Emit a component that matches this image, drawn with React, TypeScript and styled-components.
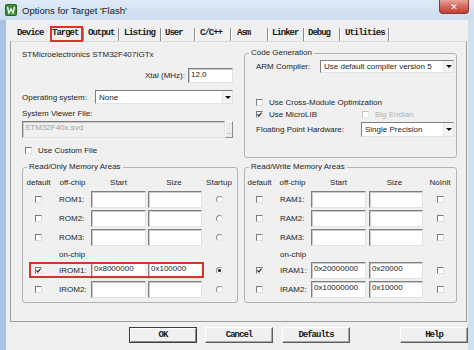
import styled, { createGlobalStyle, css } from "styled-components";

const GlobalStyle = createGlobalStyle`
  html, body {
    margin: 0;
    padding: 0;
    background: #f0f0f0;
  }
  body {
    font-family: "Liberation Sans", Arial, sans-serif;
    font-size: 8px;
    color: #1e1e1e;
  }
`;

type Tab = { label: string; width: number; pad: number; sep?: boolean; marked?: boolean };

const tabs: Tab[] = [
  { label: "Device", width: 35, pad: 3, sep: false },
  { label: "Target", width: 35, pad: 3, marked: true },
  { label: "Output", width: 35, pad: 4 },
  { label: "Listing", width: 42, pad: 5 },
  { label: "User", width: 34, pad: 4 },
  { label: "C/C++", width: 36, pad: 5 },
  { label: "Asm", width: 37, pad: 6 },
  { label: "Linker", width: 36, pad: 4 },
  { label: "Debug", width: 36, pad: 4 },
  { label: "Utilities", width: 49, pad: 5 },
];

type MemRow =
  | { caption: string }
  | { label: string; checked: boolean; start: string; size: string; end: boolean; marked?: boolean };

const romRows: MemRow[] = [
  { label: "ROM1:", checked: false, start: "", size: "", end: false },
  { label: "ROM2:", checked: false, start: "", size: "", end: false },
  { label: "ROM3:", checked: false, start: "", size: "", end: false },
  { caption: "on-chip" },
  { label: "IROM1:", checked: true, start: "0x8000000", size: "0x100000", end: true, marked: true },
  { label: "IROM2:", checked: false, start: "", size: "", end: false },
];

const ramRows: MemRow[] = [
  { label: "RAM1:", checked: false, start: "", size: "", end: false },
  { label: "RAM2:", checked: false, start: "", size: "", end: false },
  { label: "RAM3:", checked: false, start: "", size: "", end: false },
  { caption: "on-chip" },
  { label: "IRAM1:", checked: true, start: "0x20000000", size: "0x20000", end: false },
  { label: "IRAM2:", checked: false, start: "0x10000000", size: "0x10000", end: false },
];

const Window = styled.div`
  width: 474px;
  height: 350px;
  display: flex;
  flex-direction: column;
  overflow: hidden;
  background: #d3e2f1;
`;

const TitleBar = styled.header`
  height: 20px;
  flex-shrink: 0;
  display: flex;
  align-items: center;
  padding-left: 5px;
  background: linear-gradient(180deg, #dfeaf6 0%, #d2e2f2 60%, #cadcee 100%);
`;

const Title = styled.span`
  margin-left: 5px;
  font-size: 9.5px;
  color: #1b1b1b;
`;

const CloseButton = styled.div`
  align-self: flex-start;
  margin-left: auto;
  margin-right: 5px;
  width: 30px;
  height: 14px;
  box-sizing: border-box;
  border: 1px solid #8b3b33;
  border-top: none;
  border-radius: 0 0 4px 4px;
  background: linear-gradient(180deg, #e6a59b 0%, #d4685b 50%, #c2402f 100%);
  display: flex;
  align-items: center;
  justify-content: center;
  color: #fff;
  font: bold 9px "DejaVu Sans", sans-serif;
`;

const Client = styled.div`
  flex: 1;
  display: flex;
  flex-direction: column;
  background: #f0f0f0;
  border-left: 6px solid #a9c3e2;
  border-right: 6px solid #d2dfec;
`;

const TabStrip = styled.nav`
  display: flex;
  height: 15px;
  padding: 6px 0 0 8px;
`;

const TabItem = styled.div<{ $w: number; $pad: number; $sep: boolean; $marked?: boolean }>`
  position: relative;
  width: ${(p) => p.$w}px;
  box-sizing: border-box;
  padding-left: ${(p) => p.$pad}px;
  font: bold 9px "Liberation Mono", "Courier New", monospace;
  letter-spacing: -1px;
  line-height: 15px;
  color: #1a1a1a;
  ${(p) =>
    p.$sep &&
    css`
      &::before {
        content: "";
        position: absolute;
        right: 0;
        top: 2px;
        bottom: 0;
        width: 1px;
        background: #8a8a8a;
        box-shadow: 1px 0 0 #fff;
      }
    `}
  ${(p) =>
    p.$marked &&
    css`
      &::after {
        content: "";
        position: absolute;
        left: 1px;
        right: 1px;
        top: 0;
        bottom: -1px;
        border: 2px solid #d8342b;
      }
    `}
`;

const Panel = styled.section`
  margin-left: 4px;
  width: 457px;
  height: 281px;
  box-sizing: border-box;
  border: 1px solid #9c9c9c;
  border-top-color: #dcdcdc;
  padding-left: 11px;
  display: flex;
  flex-direction: column;
`;

const TopRow = styled.div`
  display: flex;
  gap: 11px;
  align-items: flex-start;
`;

const DeviceColumn = styled.div`
  width: 211px;
  display: flex;
  flex-direction: column;
`;

const DeviceName = styled.div`
  margin-top: 6px;
  line-height: 14px;
`;

const FormRow = styled.div<{ $top: number; $h: number; $end?: boolean }>`
  display: flex;
  align-items: center;
  margin-top: ${(p) => p.$top}px;
  height: ${(p) => p.$h}px;
  justify-content: ${(p) => (p.$end ? "flex-end" : "flex-start")};
`;

const Label = styled.span<{ $w?: number; $muted?: boolean }>`
  ${(p) => p.$w !== undefined && `width: ${p.$w}px; flex-shrink: 0;`}
  color: ${(p) => (p.$muted ? "#a7a7a7" : "inherit")};
  white-space: nowrap;
`;

const Caption = styled.div`
  margin-top: 4px;
  line-height: 12px;
`;

const Field = styled.div<{ $w?: number; $h?: number; $disabled?: boolean }>`
  ${(p) => (p.$w !== undefined ? `width: ${p.$w}px;` : "flex: 1;")}
  height: ${(p) => p.$h ?? 17}px;
  flex-shrink: 0;
  box-sizing: border-box;
  border: 1px solid;
  border-color: #7f7f7f #e2e2e2 #e2e2e2 #7f7f7f;
  box-shadow: inset 1px 1px 0 #cbcbcb;
  background: ${(p) => (p.$disabled ? "#f0f0f0" : "#fff")};
  color: ${(p) => (p.$disabled ? "#a3a3a3" : "#222")};
  padding: 1px 0 0 2px;
  line-height: 10px;
  white-space: nowrap;
  overflow: hidden;
`;

const BrowseButton = styled.div`
  width: 8px;
  height: 17px;
  box-sizing: border-box;
  border: 1px solid;
  border-color: #ffffff #8a8a8a #8a8a8a #ffffff;
  background: #ececec;
  font-size: 6px;
  line-height: 20px;
  text-align: center;
  color: #555;
`;

const SelectBox = styled.div<{ $w?: number; $h: number }>`
  ${(p) => (p.$w !== undefined ? `width: ${p.$w}px;` : "flex: 1;")}
  height: ${(p) => p.$h}px;
  display: flex;
  box-sizing: border-box;
  border: 1px solid;
  border-color: #7f7f7f #e2e2e2 #e2e2e2 #7f7f7f;
  background: #fff;
`;

const SelectText = styled.span`
  flex: 1;
  padding-left: 3px;
  display: flex;
  align-items: center;
  white-space: nowrap;
  overflow: hidden;
`;

const DropArrow = styled.span`
  width: 9px;
  display: flex;
  align-items: center;
  justify-content: center;
  background: #f4f4f4;
  border-left: 1px solid #e4e4e4;
  &::after {
    content: "";
    border-left: 3px solid transparent;
    border-right: 3px solid transparent;
    border-top: 3px solid #111;
  }
`;

const Box = styled.span<{ $disabled?: boolean }>`
  width: 7px;
  height: 7px;
  flex-shrink: 0;
  box-sizing: border-box;
  border: 1px solid;
  border-color: ${(p) =>
    p.$disabled ? "#c4c4c4 #e8e8e8 #e8e8e8 #c4c4c4" : "#7a7a7a #dedede #dedede #7a7a7a"};
  background: #fff;
  display: flex;
`;

const Radio = styled.span<{ $on?: boolean }>`
  width: 7px;
  height: 7px;
  box-sizing: border-box;
  border-radius: 50%;
  border: 1px solid;
  border-color: #8c8c8c #e0e0e0 #e0e0e0 #8c8c8c;
  background: #fff;
  display: flex;
  align-items: center;
  justify-content: center;
  ${(p) =>
    p.$on &&
    css`
      &::after {
        content: "";
        width: 3px;
        height: 3px;
        border-radius: 50%;
        background: #111;
      }
    `}
`;

const CheckLabel = styled.span<{ $muted?: boolean }>`
  margin-left: 6px;
  color: ${(p) => (p.$muted ? "#b0b0b0" : "inherit")};
  white-space: nowrap;
`;

const CheckItem = styled.div<{ $w?: number }>`
  display: flex;
  align-items: center;
  ${(p) => p.$w !== undefined && `width: ${p.$w}px;`}
`;

const Group = styled.fieldset<{ $w: number; $top: number }>`
  width: ${(p) => p.$w}px;
  box-sizing: border-box;
  margin: ${(p) => p.$top}px 0 0;
  padding: 0;
  min-width: 0;
  border: 1px solid #b3b3b3;
  border-radius: 3px;
`;

const Legend = styled.legend`
  padding: 0 2px;
  margin-left: 4px;
  line-height: 12px;
  color: #1e1e1e;
`;

const GroupBody = styled.div<{ $pad: number; $bottom: number }>`
  padding-left: ${(p) => p.$pad}px;
  padding-bottom: ${(p) => p.$bottom}px;
  display: flex;
  flex-direction: column;
`;

const MemoryRow = styled.div`
  display: flex;
  gap: 6px;
  margin-top: 3px;
`;

const MemGrid = styled.div`
  margin-top: 2px;
  display: flex;
  flex-direction: column;
  gap: 2px;
`;

const MemLine = styled.div<{ $h: number; $marked?: boolean }>`
  position: relative;
  display: flex;
  align-items: center;
  height: ${(p) => p.$h}px;
  ${(p) =>
    p.$marked &&
    css`
      &::after {
        content: "";
        position: absolute;
        left: 6px;
        width: 175px;
        top: 0;
        bottom: 1px;
        box-sizing: border-box;
        border: 2px solid #d8342b;
        pointer-events: none;
      }
    `}
`;

const Cell = styled.div<{ $w: number; $center?: boolean; $pad?: number }>`
  width: ${(p) => p.$w}px;
  flex-shrink: 0;
  display: flex;
  justify-content: ${(p) => (p.$center ? "center" : "flex-start")};
  padding-left: ${(p) => p.$pad ?? 0}px;
  box-sizing: border-box;
  white-space: nowrap;
`;

const Footer = styled.footer`
  display: flex;
  margin-top: 5px;
  padding-left: 123px;
`;

const DialogButton = styled.button<{ $gap: number; $default?: boolean }>`
  width: 68px;
  height: 16px;
  margin: 0 0 0 ${(p) => p.$gap}px;
  padding: 0;
  box-sizing: border-box;
  background: #f0f0f0;
  border: 1px solid;
  border-color: #ffffff #5c5c5c #5c5c5c #ffffff;
  box-shadow: inset -1px -1px 0 #a8a8a8;
  font: bold 9px "Liberation Mono", "Courier New", monospace;
  letter-spacing: -1px;
  color: #151515;
  ${(p) =>
    p.$default &&
    css`
      border-color: #3e3e3e;
      box-shadow: inset 1px 1px 0 #fff, inset -1px -1px 0 #8a8a8a;
    `}
`;

const AppIcon = () => (
  <svg width="12" height="12" viewBox="0 0 12 12">
    <rect x="0.5" y="0.5" width="11" height="11" rx="1" fill="#3f8f3a" stroke="#2a5e27" />
    <polyline points="2.5,3 4,9 6,5 8,9 9.5,3" fill="none" stroke="#fff" strokeWidth="1.3" />
  </svg>
);

const Checkbox = ({ checked, disabled }: { checked?: boolean; disabled?: boolean }) => (
  <Box $disabled={disabled}>
    {checked && (
      <svg width="5" height="5" viewBox="0 0 5 5">
        <path d="M0.4 2.4 L1.9 4 L4.6 0.6" fill="none" stroke="#222" strokeWidth="1.2" />
      </svg>
    )}
  </Box>
);

const Select = ({ value, w, h }: { value: string; w?: number; h: number }) => (
  <SelectBox $w={w} $h={h}>
    <SelectText>{value}</SelectText>
    <DropArrow />
  </SelectBox>
);

type MemoryGroupProps = {
  title: string;
  endHeader: string;
  rows: MemRow[];
  width: number;
  checkW: number;
  labelPad: number;
  gap: number;
  radios?: boolean;
};

const MemoryGroup = ({ title, endHeader, rows, width, checkW, labelPad, gap, radios }: MemoryGroupProps) => (
  <Group $w={width} $top={0}>
    <Legend>{title}</Legend>
    <GroupBody $pad={0} $bottom={4}>
      <MemGrid>
        <MemLine $h={14}>
          <Cell $w={checkW} $center>default</Cell>
          <Cell $w={37} $center>off-chip</Cell>
          <Cell $w={55} $center>Start</Cell>
          <Cell $w={54 + gap} $center>Size</Cell>
          <Cell $w={34} $center>{endHeader}</Cell>
        </MemLine>
        {rows.map((row, i) =>
          "caption" in row ? (
            <MemLine key={i} $h={12}>
              <Cell $w={checkW} />
              <Cell $w={37} $pad={labelPad}>{row.caption}</Cell>
            </MemLine>
          ) : (
            <MemLine key={i} $h={17} $marked={row.marked}>
              <Cell $w={checkW} $center>
                <Checkbox checked={row.checked} />
              </Cell>
              <Cell $w={37} $pad={labelPad}>{row.label}</Cell>
              <Field $w={55}>{row.start}</Field>
              <Cell $w={gap} />
              <Field $w={54}>{row.size}</Field>
              <Cell $w={34} $center>
                {radios ? <Radio $on={row.end} /> : <Checkbox />}
              </Cell>
            </MemLine>
          )
        )}
      </MemGrid>
    </GroupBody>
  </Group>
);

const App = () => (
  <>
    <GlobalStyle />
    <Window>
      <TitleBar>
        <AppIcon />
        <Title>Options for Target 'Flash'</Title>
        <CloseButton>✕</CloseButton>
      </TitleBar>
      <Client>
        <TabStrip>
          {tabs.map((t) => (
            <TabItem key={t.label} $w={t.width} $pad={t.pad} $sep={t.sep !== false} $marked={t.marked}>
              {t.label}
            </TabItem>
          ))}
        </TabStrip>
        <Panel>
          <TopRow>
            <DeviceColumn>
              <DeviceName>STMicroelectronics STM32F407IGTx</DeviceName>
              <FormRow $top={6} $h={15} $end>
                <Label>Xtal (MHz):</Label>
                <Field $w={45} $h={15} style={{ marginLeft: 3 }}>12.0</Field>
              </FormRow>
              <FormRow $top={7} $h={14}>
                <Label $w={73}>Operating system:</Label>
                <Select value="None" h={14} />
              </FormRow>
              <Caption>System Viewer File:</Caption>
              <FormRow $top={1} $h={17}>
                <Field $disabled>STM32F40x.svd</Field>
                <BrowseButton>...</BrowseButton>
              </FormRow>
              <FormRow $top={6} $h={12}>
                <CheckItem style={{ marginLeft: 3 }}>
                  <Checkbox />
                  <CheckLabel>Use Custom File</CheckLabel>
                </CheckItem>
              </FormRow>
            </DeviceColumn>

            <Group $w={213} $top={5}>
              <Legend>Code Generation</Legend>
              <GroupBody $pad={11} $bottom={20}>
                <FormRow $top={1} $h={13}>
                  <Label $w={64}>ARM Compiler:</Label>
                  <Select value="Use default compiler version 5" w={134} h={13} />
                </FormRow>
                <FormRow $top={23} $h={12}>
                  <CheckItem>
                    <Checkbox />
                    <CheckLabel>Use Cross-Module Optimization</CheckLabel>
                  </CheckItem>
                </FormRow>
                <FormRow $top={0} $h={12}>
                  <CheckItem $w={106}>
                    <Checkbox checked />
                    <CheckLabel>Use MicroLIB</CheckLabel>
                  </CheckItem>
                  <CheckItem>
                    <Checkbox disabled />
                    <CheckLabel $muted>Big Endian</CheckLabel>
                  </CheckItem>
                </FormRow>
                <FormRow $top={2} $h={15}>
                  <Label $w={105}>Floating Point Hardware:</Label>
                  <Select value="Single Precision" w={93} h={15} />
                </FormRow>
              </GroupBody>
            </Group>
          </TopRow>

          <MemoryRow>
            <MemoryGroup
              title="Read/Only Memory Areas"
              endHeader="Startup"
              rows={romRows}
              width={216}
              checkW={31}
              labelPad={5}
              gap={2}
              radios
            />
            <MemoryGroup
              title="Read/Write Memory Areas"
              endHeader="NoInit"
              rows={ramRows}
              width={213}
              checkW={29}
              labelPad={6}
              gap={3}
            />
          </MemoryRow>
        </Panel>
        <Footer>
          <DialogButton $gap={0} $default>OK</DialogButton>
          <DialogButton $gap={8}>Cancel</DialogButton>
          <DialogButton $gap={9}>Defaults</DialogButton>
          <DialogButton $gap={50}>Help</DialogButton>
        </Footer>
      </Client>
    </Window>
  </>
);

export default App;
